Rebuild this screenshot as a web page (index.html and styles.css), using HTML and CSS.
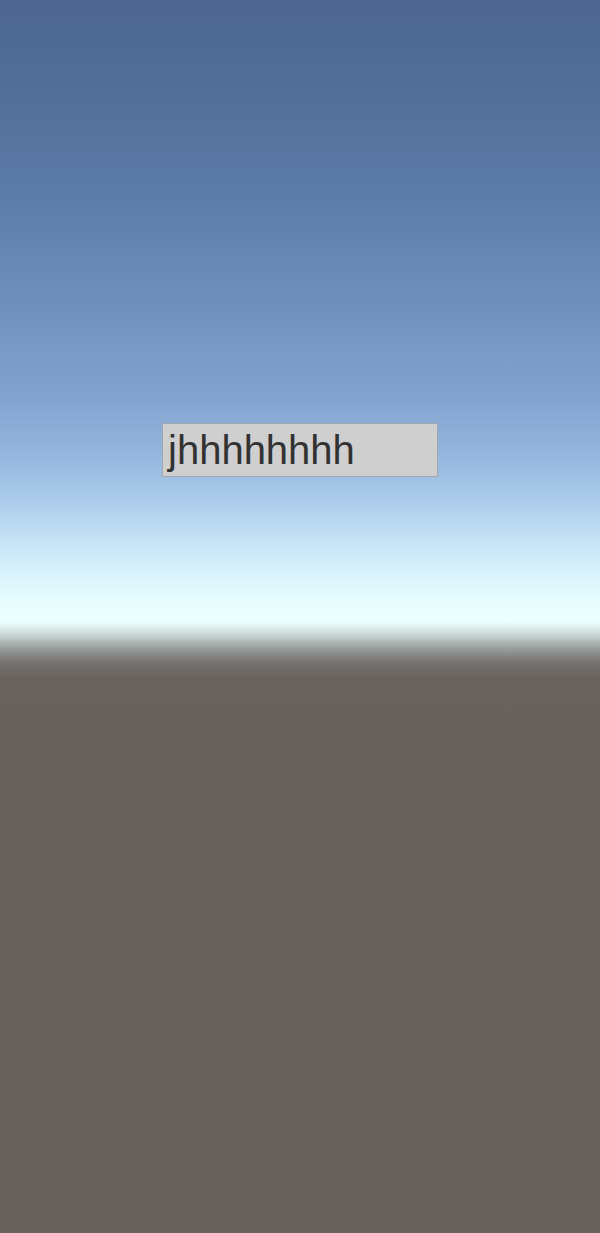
FILE: index.html
```html
<!DOCTYPE html>
<html>
<head>
<meta charset="utf-8">
<link rel="stylesheet" href="styles.css">
</head>
<body>
<div class="scene">
  <div class="field"><span class="field-text">jhhhhhhhh</span></div>
</div>
</body>
</html>
```
FILE: styles.css
```css
html, body {
  margin: 0;
  padding: 0;
}
body {
  width: 600px;
  height: 1233px;
  overflow: hidden;
}
.scene {
  width: 600px;
  height: 1233px;
  padding-top: 423px;
  box-sizing: border-box;
  background: linear-gradient(to bottom,
    #4c6690 0px,
    #52709a 100px,
    #5d7ca8 200px,
    #6e8fbd 300px,
    #82a4d0 400px,
    #93b4dc 450px,
    #aacbea 500px,
    #c5e2f5 540px,
    #dcf4fc 580px,
    #e8fdff 605px,
    #ecffff 622px,
    #c8d4d4 635px,
    #9aa09e 648px,
    #777370 662px,
    #68625c 678px,
    #67615b 1233px);
}
.field {
  width: 276px;
  height: 54px;
  margin: 0 auto;
  box-sizing: border-box;
  background: #cfcfcf;
  border: 1px solid #a3a6ab;
  padding: 0 0 0 5px;
  display: flex;
  align-items: center;
}
.field-text {
  font-family: "Liberation Sans", Arial, sans-serif;
  font-size: 40px;
  line-height: 46px;
  color: #323232;
}
```
